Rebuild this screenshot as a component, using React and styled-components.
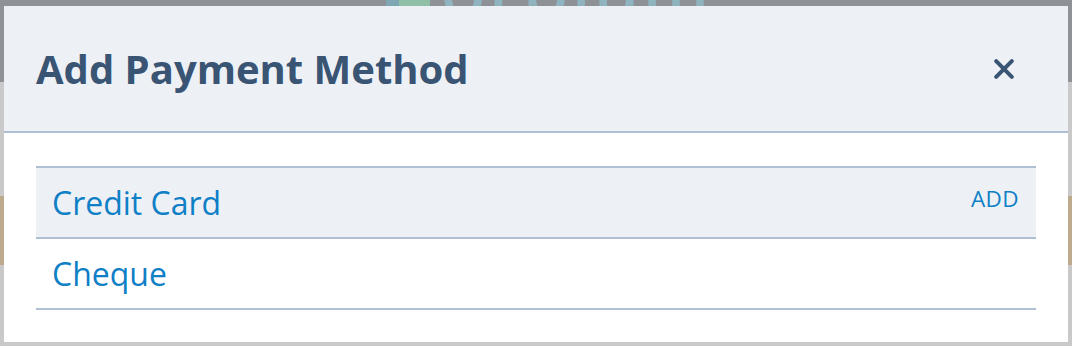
import React from "react";
import styled, { createGlobalStyle } from "styled-components";

const Global = createGlobalStyle`
  html, body { margin: 0; padding: 0; }
  body {
    width: 1072px;
    height: 346px;
    overflow: hidden;
    background: #c9c9c9;
    font-family: "Open Sans", "Noto Sans", sans-serif;
  }
`;

const Page = styled.div`
  position: relative;
  width: 1072px;
  height: 346px;
  display: flex;
  flex-direction: column;
`;

const TopBar = styled.div`
  height: 82px;
  background: #8e9196;
  display: flex;
  align-items: flex-end;
  padding-left: 386px;
  gap: 12px;
  overflow: hidden;
`;

const LogoMark = styled.div`
  width: 44px;
  height: 44px;
  border-radius: 12px;
  background: linear-gradient(90deg, #7fa7b3 0 30%, #8fbfa6 30%);
  margin-bottom: 66px;
`;

const LogoText = styled.div`
  font-size: 72px;
  line-height: 1;
  color: transparent;
  -webkit-text-stroke: 4px #8fb4bf;
  font-weight: 300;
  letter-spacing: 6px;
  margin-bottom: 58px;
`;

const Band = styled.div`
  height: ${(p) => p.$h}px;
  background: ${(p) => p.$bg};
`;

const Modal = styled.div`
  position: absolute;
  top: 6px;
  left: 4px;
  width: 1064px;
  height: 336px;
  background: #ffffff;
  display: flex;
  flex-direction: column;
`;

const Header = styled.div`
  height: 125px;
  background: #edf1f6;
  border-bottom: 2px solid #afc0d4;
  display: flex;
  align-items: center;
  justify-content: space-between;
  padding: 0 54px 0 32px;
`;

const Title = styled.h2`
  margin: 0;
  font-size: 40px;
  font-weight: 700;
  color: #3a5473;
  letter-spacing: 0;
`;

const CloseButton = styled.button`
  border: 0;
  background: none;
  padding: 0;
  width: 20px;
  height: 20px;
  display: flex;
  cursor: pointer;
`;

const Body = styled.div`
  padding: 33px 32px 0 32px;
`;

const List = styled.div`
  border-top: 2px solid #afc0d4;
`;

const Row = styled.div`
  height: 69px;
  border-bottom: 2px solid #afc0d4;
  background: ${(p) => (p.$active ? "#edf1f6" : "#ffffff")};
  display: flex;
  align-items: center;
  justify-content: space-between;
  padding: 0 17px 0 16px;
`;

const RowLabel = styled.span`
  font-size: 32px;
  color: #0f7fc6;
`;

const AddLink = styled.span`
  font-size: 22.5px;
  color: #0f7fc6;
  letter-spacing: 0.4px;
  margin-bottom: 8px;
`;

const methods = [
  { label: "Credit Card", active: true },
  { label: "Cheque", active: false },
];

export default function App() {
  return (
    <>
      <Global />
      <Page>
        <TopBar>
          <LogoMark />
          <LogoText>orbium</LogoText>
        </TopBar>
        <Band $h={114} $bg="#c9c9c9" />
        <Band $h={69} $bg="#bda98c" />
        <Band $h={81} $bg="#c9c9c9" />
        <Modal>
          <Header>
            <Title>Add Payment Method</Title>
            <CloseButton aria-label="Close">
              <svg width="20" height="20" viewBox="0 0 20 20">
                <path
                  d="M2.2 2.2 L17.8 17.8 M17.8 2.2 L2.2 17.8"
                  stroke="#3a5473"
                  strokeWidth="4"
                  strokeLinecap="round"
                />
              </svg>
            </CloseButton>
          </Header>
          <Body>
            <List>
              {methods.map((m) => (
                <Row key={m.label} $active={m.active}>
                  <RowLabel>{m.label}</RowLabel>
                  {m.active && <AddLink>ADD</AddLink>}
                </Row>
              ))}
            </List>
          </Body>
        </Modal>
      </Page>
    </>
  );
}
